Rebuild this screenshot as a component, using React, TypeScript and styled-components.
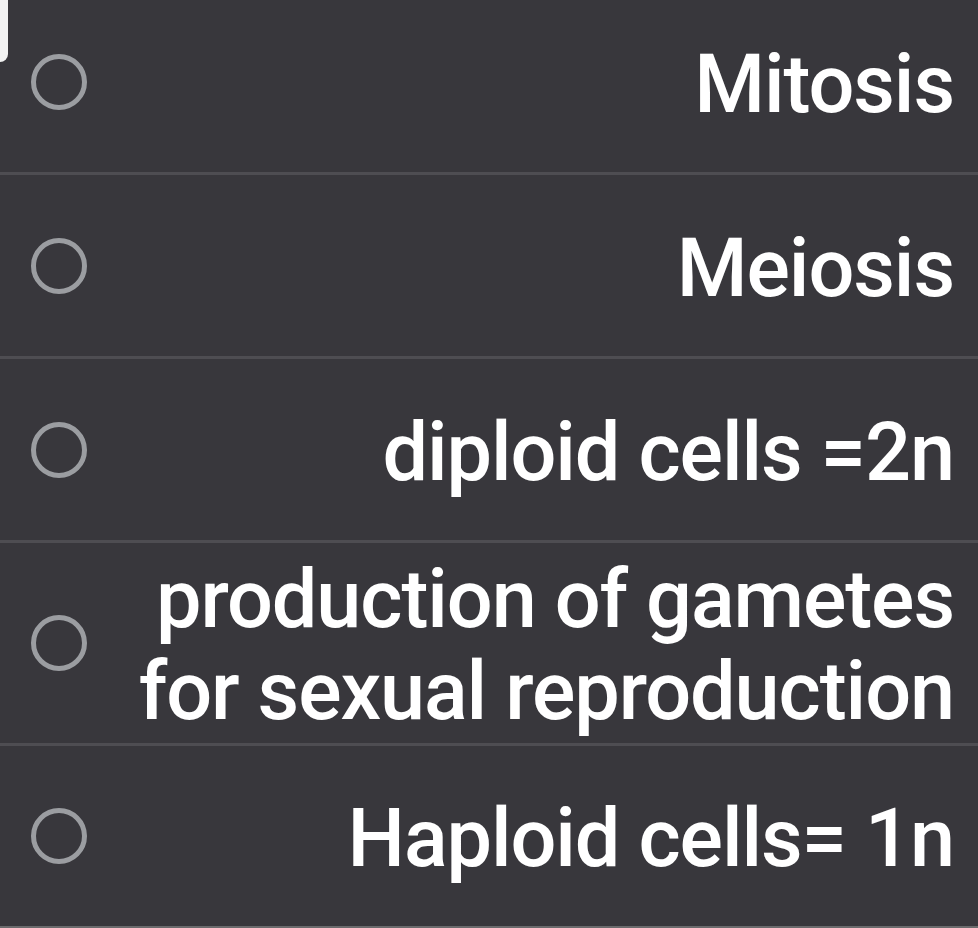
import React from "react";
import styled, { createGlobalStyle } from "styled-components";

const GlobalStyle = createGlobalStyle`
  html, body {
    margin: 0;
    padding: 0;
    background: #38373c;
    overflow: hidden;
  }
  body {
    font-family: Roboto, "Liberation Sans", Arial, sans-serif;
  }
`;

const Page = styled.div`
    position: relative;
    display: flex;
    flex-direction: column;
    width: 978px;
    height: 928px;
    background: #38373c;
    overflow: hidden;
  `,
  List = styled.div`
    flex: 1;
    display: flex;
    flex-direction: column;
    margin-top: -9px;
  `,
  Option = styled.label<{ last?: boolean }>`
    display: flex;
    align-items: center;
    justify-content: space-between;
    min-height: ${({ last }) => (last ? "180px" : "184px")};
    box-sizing: border-box;
    padding: 5px 24px 5px 31px;
    border-bottom: ${({ last }) => (last ? "none" : "3px solid #4e4d52")};
    cursor: pointer;
  `,
  Radio = styled.span`
    flex: none;
    width: 56px;
    height: 56px;
    box-sizing: border-box;
    border: 5px solid #9b9da1;
    border-radius: 50%;
  `,
  Label = styled.span`
    flex: 1;
    margin-left: 30px;
    padding-top: 6px;
    text-align: right;
    color: #ffffff;
    font-size: 81px;
    font-weight: 500;
    line-height: 92px;
    letter-spacing: -1.1px;
  `,
  Corner = styled.div`
    position: absolute;
    left: 0;
    top: 0;
    width: 8px;
    height: 62px;
    background: #f2f2f2;
    border-bottom-right-radius: 8px;
  `,
  BottomEdge = styled.div`
    height: 3px;
    background: #6b6b6d;
  `;

const options = [
  "Mitosis",
  "Meiosis",
  "diploid cells =2n",
  "production of gametes for sexual reproduction",
  "Haploid cells= 1n",
];

const App: React.FC = () => (
  <>
    <GlobalStyle />
    <Page>
      <List>
        {options.map((text, i) => (
          <Option key={text} last={i === options.length - 1}>
            <Radio />
            <Label>{text}</Label>
          </Option>
        ))}
      </List>
      <BottomEdge />
      <Corner />
    </Page>
  </>
);

export default App;
